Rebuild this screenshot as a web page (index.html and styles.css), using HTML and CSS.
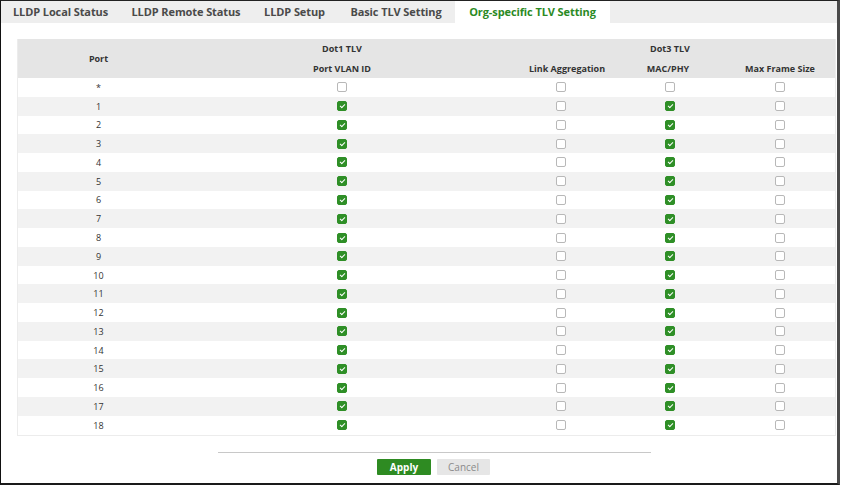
FILE: index.html
```html
<!DOCTYPE html>
<html>
<head>
<meta charset="utf-8">
<link rel="stylesheet" href="styles.css">
</head>
<body>
<div class="frame">
  <div class="tabs">
    <div class="tab t1">LLDP Local Status</div>
    <div class="tab t2">LLDP Remote Status</div>
    <div class="tab t3">LLDP Setup</div>
    <div class="tab t4">Basic TLV Setting</div>
    <div class="tab t5 active">Org-specific TLV Setting</div>
  </div>
  <div class="content">
    <div class="table">
      <div class="head">
        <div class="h-port">Port</div>
        <div class="h-dot1">Dot1 TLV</div>
        <div class="h-dot3">Dot3 TLV</div>
        <div class="h-vlan">Port VLAN ID</div>
        <div class="h-la">Link Aggregation</div>
        <div class="h-mac">MAC/PHY</div>
        <div class="h-max">Max Frame Size</div>
      </div>
      <div class="row"><div class="c-port">*</div><div class="c-vlan"><span class="cb"></span></div><div class="c-la"><span class="cb"></span></div><div class="c-mac"><span class="cb"></span></div><div class="c-max"><span class="cb"></span></div></div>
      <div class="row"><div class="c-port">1</div><div class="c-vlan"><span class="cb on"></span></div><div class="c-la"><span class="cb"></span></div><div class="c-mac"><span class="cb on"></span></div><div class="c-max"><span class="cb"></span></div></div>
      <div class="row"><div class="c-port">2</div><div class="c-vlan"><span class="cb on"></span></div><div class="c-la"><span class="cb"></span></div><div class="c-mac"><span class="cb on"></span></div><div class="c-max"><span class="cb"></span></div></div>
      <div class="row"><div class="c-port">3</div><div class="c-vlan"><span class="cb on"></span></div><div class="c-la"><span class="cb"></span></div><div class="c-mac"><span class="cb on"></span></div><div class="c-max"><span class="cb"></span></div></div>
      <div class="row"><div class="c-port">4</div><div class="c-vlan"><span class="cb on"></span></div><div class="c-la"><span class="cb"></span></div><div class="c-mac"><span class="cb on"></span></div><div class="c-max"><span class="cb"></span></div></div>
      <div class="row"><div class="c-port">5</div><div class="c-vlan"><span class="cb on"></span></div><div class="c-la"><span class="cb"></span></div><div class="c-mac"><span class="cb on"></span></div><div class="c-max"><span class="cb"></span></div></div>
      <div class="row"><div class="c-port">6</div><div class="c-vlan"><span class="cb on"></span></div><div class="c-la"><span class="cb"></span></div><div class="c-mac"><span class="cb on"></span></div><div class="c-max"><span class="cb"></span></div></div>
      <div class="row"><div class="c-port">7</div><div class="c-vlan"><span class="cb on"></span></div><div class="c-la"><span class="cb"></span></div><div class="c-mac"><span class="cb on"></span></div><div class="c-max"><span class="cb"></span></div></div>
      <div class="row"><div class="c-port">8</div><div class="c-vlan"><span class="cb on"></span></div><div class="c-la"><span class="cb"></span></div><div class="c-mac"><span class="cb on"></span></div><div class="c-max"><span class="cb"></span></div></div>
      <div class="row"><div class="c-port">9</div><div class="c-vlan"><span class="cb on"></span></div><div class="c-la"><span class="cb"></span></div><div class="c-mac"><span class="cb on"></span></div><div class="c-max"><span class="cb"></span></div></div>
      <div class="row"><div class="c-port">10</div><div class="c-vlan"><span class="cb on"></span></div><div class="c-la"><span class="cb"></span></div><div class="c-mac"><span class="cb on"></span></div><div class="c-max"><span class="cb"></span></div></div>
      <div class="row"><div class="c-port">11</div><div class="c-vlan"><span class="cb on"></span></div><div class="c-la"><span class="cb"></span></div><div class="c-mac"><span class="cb on"></span></div><div class="c-max"><span class="cb"></span></div></div>
      <div class="row"><div class="c-port">12</div><div class="c-vlan"><span class="cb on"></span></div><div class="c-la"><span class="cb"></span></div><div class="c-mac"><span class="cb on"></span></div><div class="c-max"><span class="cb"></span></div></div>
      <div class="row"><div class="c-port">13</div><div class="c-vlan"><span class="cb on"></span></div><div class="c-la"><span class="cb"></span></div><div class="c-mac"><span class="cb on"></span></div><div class="c-max"><span class="cb"></span></div></div>
      <div class="row"><div class="c-port">14</div><div class="c-vlan"><span class="cb on"></span></div><div class="c-la"><span class="cb"></span></div><div class="c-mac"><span class="cb on"></span></div><div class="c-max"><span class="cb"></span></div></div>
      <div class="row"><div class="c-port">15</div><div class="c-vlan"><span class="cb on"></span></div><div class="c-la"><span class="cb"></span></div><div class="c-mac"><span class="cb on"></span></div><div class="c-max"><span class="cb"></span></div></div>
      <div class="row"><div class="c-port">16</div><div class="c-vlan"><span class="cb on"></span></div><div class="c-la"><span class="cb"></span></div><div class="c-mac"><span class="cb on"></span></div><div class="c-max"><span class="cb"></span></div></div>
      <div class="row"><div class="c-port">17</div><div class="c-vlan"><span class="cb on"></span></div><div class="c-la"><span class="cb"></span></div><div class="c-mac"><span class="cb on"></span></div><div class="c-max"><span class="cb"></span></div></div>
      <div class="row"><div class="c-port">18</div><div class="c-vlan"><span class="cb on"></span></div><div class="c-la"><span class="cb"></span></div><div class="c-mac"><span class="cb on"></span></div><div class="c-max"><span class="cb"></span></div></div>
    </div>
    <div class="footer">
      <div class="rule"></div>
      <div class="buttons">
        <button class="btn apply">Apply</button>
        <button class="btn cancel">Cancel</button>
      </div>
    </div>
  </div>
</div>
</body>
</html>
```

FILE: styles.css
```css
html, body {
  margin: 0;
  padding: 0;
  background: #fff;
}

body {
  font-family: "Open Sans", "DejaVu Sans", sans-serif;
  color: #333;
}

.frame {
  width: 840px;
  height: 485px;
  box-sizing: border-box;
  border-left: 1px solid #111;
  border-top: 1px solid #222;
  border-right: 3px solid #4a4a4a;
  border-bottom: 2px solid #1a1a1a;
  background: #fff;
  overflow: hidden;
}

.tabs {
  display: flex;
  height: 22px;
  background: #eeeeee;
}

.tab {
  height: 22px;
  line-height: 22px;
  text-align: center;
  font-size: 11px;
  font-weight: 700;
  color: #4a4a4a;
  white-space: nowrap;
  letter-spacing: -0.1px;
}

.t1 { width: 119px; }
.t2 { width: 132px; }
.t3 { width: 85px; }
.t4 { width: 118px; }
.t5 { width: 155px; }

.tab.active {
  background: #fff;
  color: #2b8a24;
}

.content {
  padding: 16px 0 0 16px;
}

.table {
  width: 819px;
  box-sizing: border-box;
  border: 1px solid #ececec;
  border-top: none;
}

.head,
.row {
  display: grid;
  grid-template-columns: 161px 326px 124px 78px 128px;
}

.head {
  grid-template-rows: 19.5px 19.5px;
  background: #e5e5e5;
  font-size: 9px;
  font-weight: 700;
  color: #333;
}

.head > div {
  display: flex;
  align-items: center;
  justify-content: center;
  white-space: nowrap;
}

.h-port { grid-column: 1; grid-row: 1 / 3; }
.h-dot1 { grid-column: 2; grid-row: 1; }
.h-dot3 { grid-column: 3 / 6; grid-row: 1; }
.h-vlan { grid-column: 2; grid-row: 2; }
.h-la { grid-column: 3; grid-row: 2; }
.h-mac { grid-column: 4; grid-row: 2; }
.h-max { grid-column: 5; grid-row: 2; padding-left: 18px; }

.row {
  height: 18.78px;
  font-size: 9px;
  color: #333;
}

.row:nth-child(odd) {
  background: #f2f2f2;
}

.row > div {
  display: flex;
  align-items: center;
  justify-content: center;
}

.c-la { padding-right: 12px; }
.c-mac { padding-left: 4px; }
.c-max { padding-left: 18px; }

.cb {
  position: relative;
  display: block;
  width: 10px;
  height: 10px;
  box-sizing: border-box;
  border: 1px solid #b8b8b8;
  border-radius: 2px;
  background: #fff;
}

.cb.on {
  background: #2f8f27;
  border-color: #2f8f27;
}

.cb.on::after {
  content: "";
  position: absolute;
  left: 3px;
  top: 1px;
  width: 2px;
  height: 4px;
  border: solid #fff;
  border-width: 0 1.3px 1.3px 0;
  transform: rotate(45deg);
}

.footer {
  padding-top: 16px;
}

.rule {
  margin-left: 201px;
  width: 433px;
  height: 1px;
  background: #c8c8c8;
}

.buttons {
  display: flex;
  gap: 6px;
  margin-left: 360px;
  margin-top: 6px;
}

.btn {
  height: 16px;
  padding: 0;
  border: none;
  border-radius: 1px;
  font-family: "Open Sans", "DejaVu Sans", sans-serif;
  font-size: 10px;
  line-height: 16px;
  cursor: pointer;
}

.apply {
  width: 54px;
  background: #2e8b22;
  color: #fff;
  font-weight: 700;
}

.cancel {
  width: 53px;
  background: #e6e6e6;
  color: #8a8a8a;
}
```
